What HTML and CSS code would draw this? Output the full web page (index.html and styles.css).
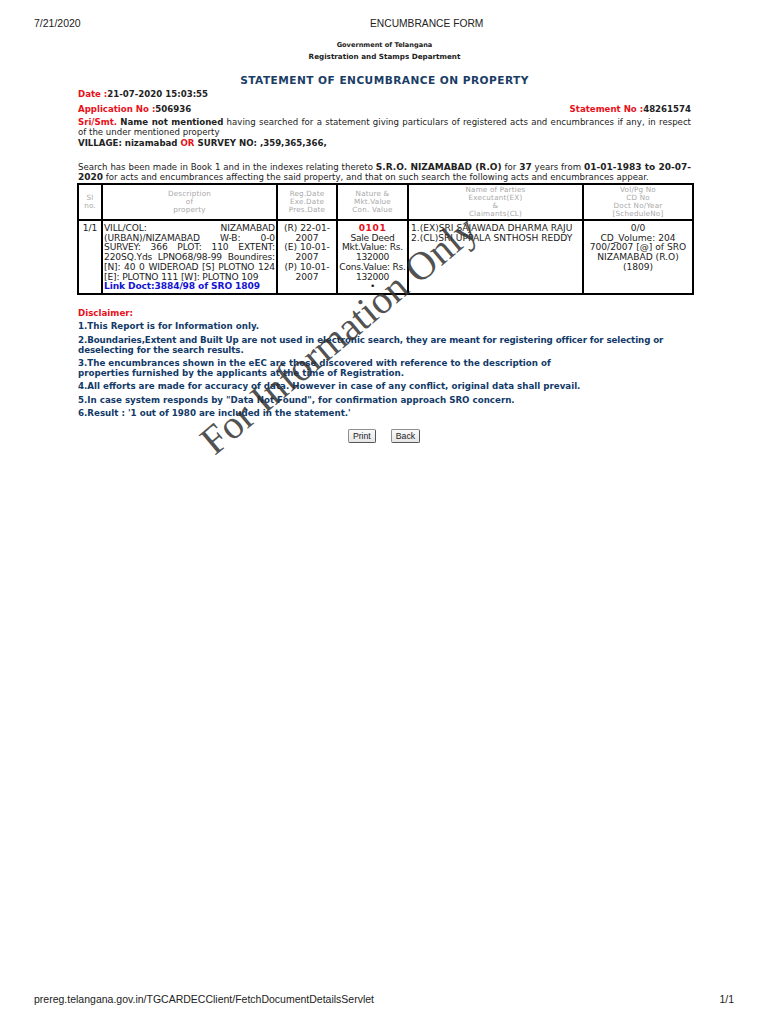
FILE: index.html
```html
<!DOCTYPE html>
<html lang="en">
<head>
<meta charset="utf-8">
<title>ENCUMBRANCE FORM</title>
<link rel="stylesheet" href="styles.css">
</head>
<body>
<div class="page">
  <header class="print-head">
    <span class="print-date">7/21/2020</span>
    <span class="print-title">ENCUMBRANCE FORM</span>
  </header>
  <main class="sheet">
    <div class="gov">Government of Telangana</div>
    <div class="dept">Registration and Stamps Department</div>
    <h1 class="title">STATEMENT OF ENCUMBRANCE ON PROPERTY</h1>
    <div class="line date"><b class="red">Date :</b><b>21-07-2020 15:03:55</b></div>
    <div class="line split">
      <span><b class="red">Application No :</b><b>506936</b></span>
      <span><b class="red">Statement No :</b><b>48261574</b></span>
    </div>
    <p class="para just"><b class="red">Sri/Smt.</b> <b>Name not mentioned</b> having searched for a statement giving particulars of registered acts and encumbrances if any, in respect of the under mentioned property</p>
    <div class="line village"><b>VILLAGE: nizamabad <span class="red">OR</span> SURVEY NO: ,359,365,366,</b></div>
    <p class="para just search">Search has been made in Book 1 and in the indexes relating thereto <b>S.R.O. NIZAMABAD (R.O)</b> for <b>37</b> years from <b>01-01-1983 to 20-07-2020</b> for acts and encumbrances affecting the said property, and that on such search the following acts and encumbrances appear.</p>
    <table class="grid">
      <colgroup>
        <col class="c1"><col class="c2"><col class="c3"><col class="c4"><col class="c5"><col class="c6">
      </colgroup>
      <thead>
        <tr>
          <th>Sl<br>no.</th>
          <th>Description<br>of<br>property</th>
          <th>Reg.Date<br>Exe.Date<br>Pres.Date</th>
          <th>Nature &amp;<br>Mkt.Value<br>Con. Value</th>
          <th>Name of Parties<br>Executant(EX)<br>&amp;<br>Claimants(CL)</th>
          <th>Vol/Pg No<br>CD No<br>Doct No/Year<br>[ScheduleNo]</th>
        </tr>
      </thead>
      <tbody>
        <tr>
          <td class="mid">1/1</td>
          <td class="just desc">VILL/COL: NIZAMABAD (URBAN)/NIZAMABAD W-B: 0-0 SURVEY: 366 PLOT: 110 EXTENT: 220SQ.Yds LPNO68/98-99 Boundires: [N]: 40 0 WIDEROAD [S] PLOTNO 124 [E]: PLOTNO 111 [W]: PLOTNO 109<br><b class="link">Link Doct:3884/98 of SRO 1809</b></td>
          <td class="mid">(R) 22-01-2007<br>(E) 10-01-2007<br>(P) 10-01-2007</td>
          <td class="mid nature"><b class="red code">0101</b><br>Sale Deed<br>Mkt.Value: Rs. 132000<br>Cons.Value: Rs. 132000<br>•</td>
          <td>1.(EX)SRI SAJAWADA DHARMA RAJU<br>2.(CL)SRI UPPALA SNTHOSH REDDY</td>
          <td class="mid">0/0<br>CD_Volume: 204<br>700/2007 [@] of SRO NIZAMABAD (R.O)<br>(1809)</td>
        </tr>
      </tbody>
    </table>
    <section class="notes">
      <div class="note red">Disclaimer:</div>
      <div class="note">1.This Report is for Information only.</div>
      <div class="note tight">2.Boundaries,Extent and Built Up are not used in electronic search, they are meant for registering officer for selecting or deselecting for the search results.</div>
      <div class="note">3.The encumbrances shown in the eEC are those discovered with reference to the description of<br>properties furnished by the applicants at the time of Registration.</div>
      <div class="note">4.All efforts are made for accuracy of data. However in case of any conflict, original data shall prevail.</div>
      <div class="note">5.In case system responds by "Data Not Found", for confirmation approach SRO concern.</div>
      <div class="note">6.Result : '1 out of 1980 are included in the statement.'</div>
    </section>
    <div class="actions">
      <button class="btn" type="button">Print</button>
      <button class="btn" type="button">Back</button>
    </div>
  </main>
  <footer class="print-foot">
    <span>prereg.telangana.gov.in/TGCARDECClient/FetchDocumentDetailsServlet</span>
    <span>1/1</span>
  </footer>
  <div class="watermark">For Information Only</div>
</div>
</body>
</html>
```
FILE: styles.css
```css
html, body { margin: 0; padding: 0; background: #fff; }
.page {
  position: relative;
  width: 768px;
  height: 1024px;
  overflow: hidden;
  display: flex;
  flex-direction: column;
  font-family: "DejaVu Sans", Verdana, sans-serif;
  color: #222;
}
.print-head {
  display: grid;
  grid-template-columns: 336px auto;
  padding: 17px 34px 0;
  font: 10.5px/12px "Liberation Sans", Arial, sans-serif;
  color: #222;
}
.print-title { font-size: 10.25px; line-height: 14px; }
.sheet {
  flex: 1;
  margin: 0 77px 0 78px;
  font-size: 8.6px;
  line-height: 10px;
}
.gov, .dept {
  text-align: center;
  font-weight: 700;
  font-size: 6.6px;
  color: #222;
}
.gov { margin-top: 10px; line-height: 9px; }
.dept { margin-top: 2px; line-height: 10px; font-size: 7.2px; }
.title {
  margin: 12px 0 0;
  text-align: center;
  font-size: 10.6px;
  line-height: 13px;
  font-weight: 700;
  color: #1a3d66;
  letter-spacing: 0.45px;
}
.red { color: #e8101a; }
.line { line-height: 11px; }
.date { margin-top: 2px; }
.split { display: flex; justify-content: space-between; margin-top: 4px; }
.para { margin: 0; }
.just { text-align: justify; }
.split + .para { margin-top: 2px; }
.village { margin-top: 1px; }
.search { margin-top: 13px; }
.search b { font-size: 9px; }
.grid {
  width: 615px;
  margin: 1px 0 0 -1px;
  table-layout: fixed;
  border-collapse: collapse;
  border: 2px solid #000;
}
.c1 { width: 24px; }
.c2 { width: 175px; }
.c3 { width: 60px; }
.c4 { width: 71px; }
.c5 { width: 175px; }
.c6 { width: 110px; }
.grid th, .grid td { border: 2px solid #000; }
.grid thead { position: relative; z-index: 2; }
.grid th {
  height: 34px;
  padding: 0 2px;
  font-size: 7.2px;
  line-height: 7.8px;
  font-weight: 400;
  color: #a8a8a8;
  background: #fff;
  text-align: center;
  vertical-align: middle;
  letter-spacing: 0.2px;
}
.grid td {
  height: 69px;
  padding: 3px 2px 0;
  vertical-align: top;
  font-size: 9.1px;
  line-height: 9.7px;
  color: #222;
}
.grid td.mid { text-align: center; }
.grid td.desc { padding: 3px 1px 0; letter-spacing: -0.12px; }
.grid td.nature { padding: 3px 0 0; letter-spacing: -0.25px; }
.link { color: #1414d2; }
.code { letter-spacing: 0.6px; }
.notes { margin-top: 14px; font-weight: 700; color: #123a68; font-size: 8.7px; line-height: 9.6px; }
.note { margin-bottom: 3.9px; }
.note.red { color: #e8101a; }
.note.tight { letter-spacing: -0.09px; }
.actions {
  display: flex;
  justify-content: center;
  gap: 15px;
  margin: 10px 0 0 -1px;
}
.btn {
  min-width: 28px;
  height: 14px;
  padding: 0 4px;
  font: 8.7px/12px "Liberation Sans", Arial, sans-serif;
  color: #222;
  background: linear-gradient(#fafafa, #e6e6e6);
  border: 1px solid #8f8f8f;
  border-right-color: #555;
  border-bottom-color: #555;
  border-radius: 2px;
}
.print-foot {
  display: flex;
  justify-content: space-between;
  padding: 0 34px 19px;
  font: 10.5px/12px "Liberation Sans", Arial, sans-serif;
  color: #222;
}
.watermark {
  position: absolute;
  z-index: 1;
  left: 119px;
  top: 310px;
  width: 440px;
  text-align: center;
  font: 40px/50px "Liberation Serif", "Times New Roman", serif;
  color: rgba(50, 50, 50, 0.85);
  transform: rotate(-40deg);
  white-space: nowrap;
}
```
